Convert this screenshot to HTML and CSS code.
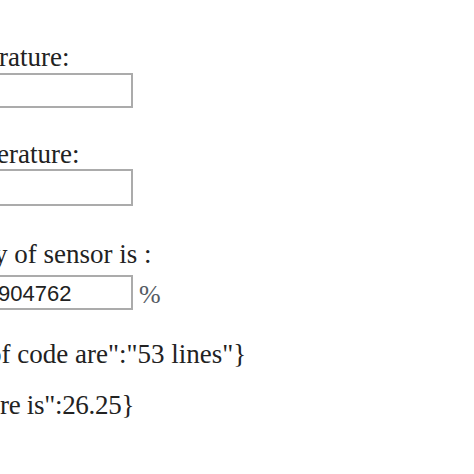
FILE: index.html
```html
<!DOCTYPE html>
<html>
<head>
<meta charset="utf-8">
<link rel="stylesheet" href="styles.css">
</head>
<body>
<div class="page">
  <div class="label l1">rature:</div>
  <input class="field f1" type="text" value="">
  <div class="label l2">erature:</div>
  <input class="field f2" type="text" value="">
  <div class="label l3">y of sensor is :</div>
  <div class="row r3">
    <input class="field f3" type="text" value="904762">
    <span class="unit">%</span>
  </div>
  <div class="label l4">of code are":"53 lines"}</div>
  <div class="label l5">re is":26.25}</div>
</div>
</body>
</html>
```
FILE: styles.css
```css
html, body {
  margin: 0;
  padding: 0;
  background: #ffffff;
  overflow: hidden;
}
.page {
  padding-top: 42px;
  font-family: "Liberation Serif", "Times New Roman", serif;
  font-size: 27px;
  color: #222222;
}
.label {
  display: block;
  line-height: 30px;
  height: 30px;
  white-space: nowrap;
}
.field {
  display: block;
  box-sizing: border-box;
  margin: 0 0 0 -10px;
  width: 143px;
  height: 35px;
  border: 2px solid #ababab;
  border-radius: 0;
  background: #fff;
  font-family: "Liberation Sans", Arial, sans-serif;
  font-size: 22px;
  color: #222222;
  padding: 3px 0 0 6px;
  outline: none;
}
.l1 { text-indent: -1px; }
.f1 { margin-top: 1px; }
.l2 { margin-top: 31px; text-indent: -3px; }
.f2 { margin-top: 0; height: 37px; }
.l3 { margin-top: 33px; text-indent: -6px; }
.r3 {
  display: flex;
  align-items: center;
  margin-top: 6px;
}
.unit {
  margin-left: 6px;
  font-size: 26px;
  color: #555b63;
  line-height: 30px;
  padding-top: 4px;
}
.l4 { margin-top: 29px; text-indent: -12px; }
.l5 { margin-top: 21px; text-indent: 0; letter-spacing: -0.3px; }
```
